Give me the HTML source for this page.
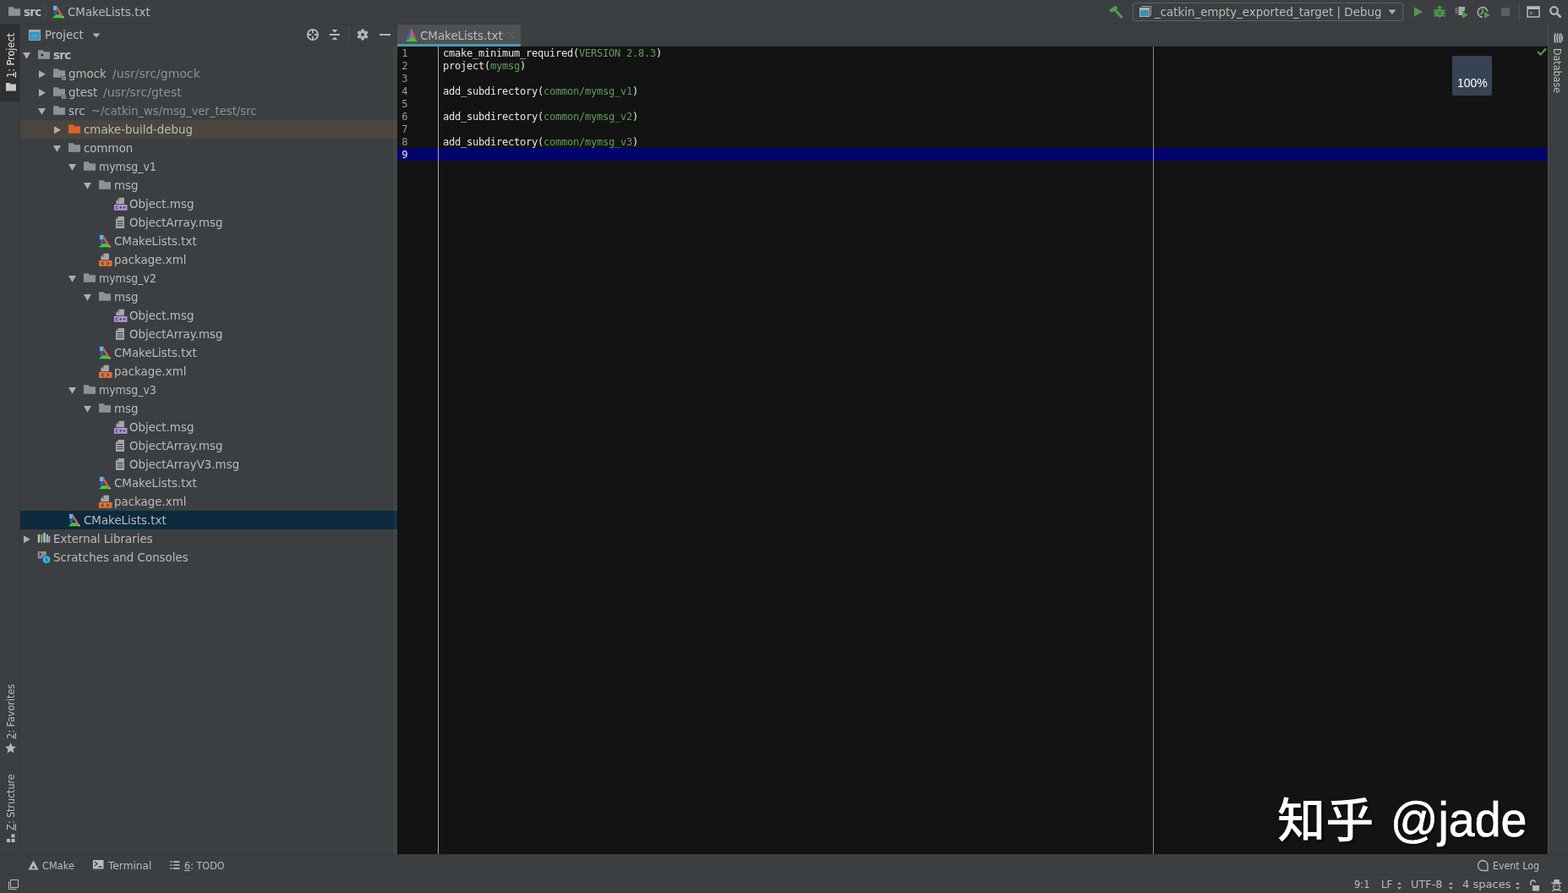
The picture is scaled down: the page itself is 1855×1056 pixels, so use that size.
<!DOCTYPE html>
<html><head><meta charset="utf-8"><title>CLion</title>
<style>
html,body{margin:0;padding:0;background:#3c3f41;}
body{width:1855px;height:1056px;position:relative;overflow:hidden;font-family:"DejaVu Sans","Liberation Sans",sans-serif;font-size:13.4px;color:#bbbbbb;}
div,span,svg{position:absolute;}
.ui{white-space:pre;line-height:22px;height:22px;}
#nav{left:0;top:0;width:1855px;height:28px;background:#3c3f41;}
#lstripe{left:0;top:28px;width:23px;height:982px;background:#3c3f41;border-right:1px solid #35383a;}
#rstripe{left:1831px;top:28px;width:24px;height:982px;background:#3c3f41;border-left:1px solid #505355;box-sizing:border-box;}
#proj{left:24px;top:28px;width:446px;height:982px;background:#3c3f41;}
#phead{left:0;top:0;width:446px;height:25px;border-bottom:1px solid #35383a;}
.row{left:0;width:446px;height:22px;margin-top:-28px;}
.row.excl{background:#4a463d;}
.row.sel{background:#0d293e;}
.ar{top:5px;fill:#adadad;}
.ic{top:3px;}
.nm{transform-origin:0 50%;top:1px;line-height:22px;height:22px;white-space:pre;color:#bbbbbb;}
.nm i{font-style:normal;color:#8e9192;margin-left:7px;display:inline-block;transform-origin:0 50%;}
.nm b{font-weight:bold;letter-spacing:-0.7px;}
#tabs{left:470px;top:28px;width:1361px;height:26px;background:#3c3f41;border-bottom:1px solid #35383a;}
#tab{left:0px;top:1px;width:146px;height:26px;background:#4e5254;}
#tab .ul{left:0;top:23px;width:146px;height:3px;background:#4a9ab4;}
#ed{left:470px;top:55px;width:1361px;height:955px;background:#131313;}
#gut{left:48px;top:0;width:1px;height:956px;background:rgba(255,255,255,.64);}
#margin{left:894px;top:0;width:1px;height:956px;background:rgba(255,255,255,.5);}
#curline{left:0;top:120px;width:1361px;height:15px;background:#03036e;}
.ln,.cl{font-family:"DejaVu Sans Mono","Liberation Mono",monospace;font-size:12px;letter-spacing:-0.224px;line-height:15px;height:15px;white-space:pre;margin-top:1px;}
.ln{left:5.300px;color:#9a9a9a;}
.ln.cur{color:#e8e8e8;}
.cl{left:54px;color:#e6e6e6;}
.cl em{font-style:normal;color:#5f9f58;}
#zoom{left:1248px;top:11px;width:47px;height:47px;background:#374253;border-radius:2px;}
#zoom span{white-space:pre;left:6px;top:22px;color:#ffffff;font-family:"Liberation Sans",sans-serif;font-size:14px;line-height:20px;}
.wm{white-space:pre;color:#fff;line-height:70px;height:70px;text-shadow:2px 2px 3px rgba(0,0,0,.7);}
#wm1{left:1040.800px;top:876px;transform-origin:0 50%;transform:scaleX(1.03);font-family:"Noto Sans CJK SC","WenQuanYi Zen Hei",sans-serif;font-weight:500;font-size:55.500px;letter-spacing:0;}
#wm2{left:1175px;top:878.500px;transform-origin:0 50%;transform:scaleX(0.975);font-family:"Liberation Sans",sans-serif;font-size:57px;-webkit-text-stroke:0.700px #fff;}
#btool{left:0;top:1010px;width:1855px;height:24px;background:#3c3f41;border-top:1px solid #35383a;box-sizing:border-box;}
#status{left:0;top:1034px;width:1855px;height:22px;background:#3c3f41;border-top:1px solid #35383a;box-sizing:border-box;}
.sm{font-size:12.4px;white-space:pre;line-height:20px;transform-origin:0 50%;}
.vt{white-space:pre;font-size:12.4px;line-height:16px;transform-origin:0 0;transform:rotate(-90deg);}
.vtr{white-space:pre;font-size:12.4px;line-height:16px;transform-origin:0 0;transform:rotate(90deg);}
u{text-decoration:underline;}
body{will-change:transform;}
</style></head><body>


<div id="nav">
 <svg style="left:9px;top:6px" width="16" height="16" viewBox="0 0 16 16"><path d="M1 2.200h5.600l1.500 2H15v8.500H1z" fill="#87939a"/></svg>
 <span class="ui" style="left:28px;top:4px;font-weight:bold;letter-spacing:-0.7px">src</span>
 <svg style="left:50px;top:5px" width="8" height="18" viewBox="0 0 8 18"><path d="M1.500 1l4 8-4 8" stroke="#4d5052" stroke-width="1" fill="none"/></svg>
 <svg style="left:61px;top:6px" width="16" height="16" viewBox="0 0 16 16"><path d="M2 0.800h4.500v5.500H2z" fill="#58b4e8"/><path d="M3 6.300h4.200L5.500 11 2.500 12z" fill="#3a55c8"/><path d="M6.500 1.200L15 15l-5.500-3.300L7 6.300z" fill="#e25548"/><path d="M0.800 15.300h14.200l-5-3.800-4.500-.5z" fill="#35d435"/><path d="M13.500 12.500l1.800 2.800h-2.500z" fill="#b8b8b8"/></svg>
 <span class="ui" style="left:80px;top:4px">CMakeLists.txt</span>

 <svg style="left:1311px;top:5px" width="18" height="18" viewBox="0 0 18 18"><path d="M2.500 8.200L10.300 3.400" stroke="#4f9b55" stroke-width="4.200" fill="none"/><path d="M8 6.500l7.800 8.800" stroke="#4f9b55" stroke-width="2.900" stroke-linecap="round" fill="none"/></svg>
 <div style="left:1340px;top:3px;width:318px;height:20px;border:1px solid #5e6162;border-radius:2px;"></div>
 <svg style="left:1347px;top:6px" width="16" height="16" viewBox="0 0 16 16"><path d="M3.500 1.500h11v11" stroke="#9ea3a6" fill="none"/><rect x="1.500" y="3.500" width="11" height="10" fill="#3f8fb5" stroke="#aab0b4"/><rect x="2" y="4" width="10" height="2" fill="#aab0b4"/></svg>
 <span class="ui" style="left:1366px;top:4px">_catkin_empty_exported_target | Debug</span>
 <svg style="left:1642px;top:11px" width="10" height="7" viewBox="0 0 10 7"><path d="M0.500 0.500h9L5 6z" fill="#b0b0b0"/></svg>
 <svg style="left:1672px;top:8px" width="12" height="12" viewBox="0 0 12 12"><path d="M1 0.300v11.400L11 6z" fill="#4a9c4d"/></svg>
 <svg style="left:1695px;top:6px" width="16" height="16" viewBox="0 0 16 16"><ellipse cx="8" cy="9.200" rx="4.400" ry="5.300" fill="#4a9c4d"/><path d="M5.500 3.500a2.500 2.500 0 0 1 5 0z" fill="#4a9c4d"/><path d="M1.500 5.500l3 2M14.500 5.500l-3 2M1 9.500h3M15 9.500h-3M1.500 13.500l3-2M14.500 13.500l-3-2" stroke="#4a9c4d" stroke-width="1.900"/><path d="M6 8h4M6 10.500h4" stroke="#3c3f41" stroke-width="1"/></svg>
 <svg style="left:1721px;top:6px" width="17" height="17" viewBox="0 0 17 17"><path d="M4.500 2h7.500v4.500l-3 1.500v4H4.500z" fill="#a4a9ac"/><path d="M0.500 4h3M0.500 6.500h3M0.500 9h3" stroke="#a4a9ac" stroke-width="1.200"/><path d="M9 7.800v8l7-4z" fill="#4a9c4d"/></svg>
 <svg style="left:1747px;top:6px" width="17" height="17" viewBox="0 0 17 17"><path d="M7 14.200A5.800 5.800 0 1 1 12.800 7.500" stroke="#a4a9ac" stroke-width="1.600" fill="none"/><path d="M7 4.500V9l-2.500 2" stroke="#a4a9ac" stroke-width="1.300" fill="none"/><path d="M9 7.800v8l7-4z" fill="#4a9c4d"/></svg>
 <div style="left:1776px;top:9px;width:10px;height:10px;background:#5c5f61;"></div>
 <div style="left:1797px;top:4px;width:1px;height:19px;background:#4f5254;"></div>
 <svg style="left:1806px;top:7px" width="16" height="14" viewBox="0 0 16 14"><rect x="1" y="1" width="14" height="12" fill="none" stroke="#b4b8ba" stroke-width="1.500"/><rect x="1" y="1" width="14" height="3" fill="#b4b8ba"/><path d="M4 6v5l4-2.500z" fill="#4a9c4d"/></svg>
 <svg style="left:1832px;top:6px" width="16" height="16" viewBox="0 0 16 16"><circle cx="6.500" cy="6.500" r="4.300" fill="none" stroke="#b4b8ba" stroke-width="2.200"/><path d="M9.800 9.800l4.700 4.700" stroke="#b4b8ba" stroke-width="2.600"/></svg>
</div>

<div id="lstripe">
 <div style="left:0;top:0;width:23px;height:92px;background:#2e3032;"></div>
 <svg style="left:7px;top:70px" width="12" height="10" viewBox="0 0 12 10"><path d="M0 0h4.500l1.200 1.600H12V9.500H0z" fill="#c8c8c8"/></svg>
 <span class="vt" style="left:5px;top:63.500px;color:#e4e4e4;transform:rotate(-90deg) scaleX(0.9074)"><u>1</u>: Project</span>
 <span class="vt" style="left:5px;top:846px;transform:rotate(-90deg) scaleX(0.9058)"><u>2</u>: Favorites</span>
 <svg style="left:6px;top:850px" width="13" height="13" viewBox="0 0 13 13"><path d="M6.500 0.300l1.900 4.200 4.400.5-3.300 3 1 4.500-4-2.400-4 2.400 1-4.500-3.300-3 4.400-.5z" fill="#b8b8b8"/></svg>
 <span class="vt" style="left:5px;top:953.500px;transform:rotate(-90deg) scaleX(0.8981)"><u>Z</u>: Structure</span>
 <svg style="left:8px;top:958px" width="10" height="11" viewBox="0 0 10 11"><rect x="5.500" y="0.500" width="4" height="4" fill="#b8b8b8"/><rect x="0" y="6" width="4" height="4" fill="#b8b8b8"/><rect x="5.500" y="6" width="4" height="4" fill="#b8b8b8"/></svg>
</div>
<div id="proj">
 <div id="phead">
  <svg style="left:10px;top:7px" width="14" height="13" viewBox="0 0 14 13"><rect x="0.500" y="0.500" width="13" height="12" fill="#3592c4" stroke="#9aa7b0"/><rect x="0.500" y="0.500" width="13" height="2.500" fill="#9aa7b0"/><rect x="3.500" y="5" width="7" height="5" fill="#40a0d0"/></svg>
  <span class="ui" style="left:29px;top:3px">Project</span>
  <svg style="left:85px;top:11px" width="10" height="6" viewBox="0 0 10 6"><path d="M0.500 0.500h9L5 5.500z" fill="#b0b0b0"/></svg>
  <svg style="left:338px;top:5px" width="16" height="16" viewBox="0 0 16 16"><circle cx="8" cy="8" r="6.100" fill="none" stroke="#b4b8ba" stroke-width="1.900"/><path d="M8 2v4.200M8 9.800v4.200M2 8h4.200M9.800 8h4.200" stroke="#b4b8ba" stroke-width="1.800"/></svg>
  <svg style="left:364px;top:5px" width="16" height="16" viewBox="0 0 16 16"><path d="M1.800 8h12.200" stroke="#b4b8ba" stroke-width="2"/><path d="M4.400 2.100h7.100L8 5.400zM4.400 14.100h7.100L8 10.800z" fill="#b4b8ba"/></svg>
  <div style="left:388px;top:4px;width:1px;height:18px;background:#4b4e50;"></div>
  <svg style="left:397px;top:5px" width="16" height="16" viewBox="0 0 16 16"><g fill="#b4b8ba"><circle cx="8" cy="8" r="4.700"/><rect x="6.200" y="1.400" width="3.600" height="13.200" rx="0.800"/><rect x="6.200" y="1.400" width="3.600" height="13.200" rx="0.800" transform="rotate(60 8 8)"/><rect x="6.200" y="1.400" width="3.600" height="13.200" rx="0.800" transform="rotate(120 8 8)"/></g><circle cx="8" cy="8" r="2" fill="#3c3f41"/></svg>
  <div style="left:425px;top:12px;width:12.500px;height:2px;background:#b4b8ba;"></div>
 </div>
<div class="row" style="top:54px"><svg class="ar" style="left:2px" width="12" height="12" viewBox="0 0 12 12"><path d="M1 3h9L5.500 10.800z"/></svg><svg class="ic" style="left:20px" width="17" height="16" viewBox="0 0 17 16"><path d="M1 2.200h5.600l1.500 2H15v8.500H1z" fill="#87939a"/><circle cx="5.800" cy="8" r="1.600" fill="#2b2f36"/></svg><span class="nm" style="left:39px"><b>src</b></span></div>
<div class="row" style="top:76px"><svg class="ar" style="left:20px" width="12" height="12" viewBox="0 0 12 12"><path d="M2 2.300v9l8-4.500z"/></svg><svg class="ic" style="left:38px" width="17" height="16" viewBox="0 0 17 16"><path d="M1 2.200h5.600l1.500 2H15v6.800h-4.500v1.700H1z" fill="#87939a"/><rect x="11.700" y="12" width="3.600" height="3.100" fill="#55595c" stroke="#b4babd" stroke-width="0.900"/></svg><span class="nm" style="left:57px">gmock<i style="transform:scaleX(1.0515)">/usr/src/gmock</i></span></div>
<div class="row" style="top:98px"><svg class="ar" style="left:20px" width="12" height="12" viewBox="0 0 12 12"><path d="M2 2.300v9l8-4.500z"/></svg><svg class="ic" style="left:38px" width="17" height="16" viewBox="0 0 17 16"><path d="M1 2.200h5.600l1.500 2H15v6.800h-4.500v1.700H1z" fill="#87939a"/><rect x="11.700" y="12" width="3.600" height="3.100" fill="#55595c" stroke="#b4babd" stroke-width="0.900"/></svg><span class="nm" style="left:57px">gtest<i style="transform:scaleX(1.0523)">/usr/src/gtest</i></span></div>
<div class="row" style="top:120px"><svg class="ar" style="left:20px" width="12" height="12" viewBox="0 0 12 12"><path d="M1 3h9L5.500 10.800z"/></svg><svg class="ic" style="left:38px" width="17" height="16" viewBox="0 0 17 16"><path d="M1 2.200h5.600l1.500 2H15v8.500H1z" fill="#87939a"/></svg><span class="nm" style="left:57px">src<i style="transform:scaleX(0.9823)">~/catkin_ws/msg_ver_test/src</i></span></div>
<div class="row excl" style="top:142px"><svg class="ar" style="left:38px" width="12" height="12" viewBox="0 0 12 12"><path d="M2 2.300v9l8-4.500z"/></svg><svg class="ic" style="left:56px" width="17" height="16" viewBox="0 0 17 16"><path d="M1 2.200h5.600l1.500 2H15v8.500H1z" fill="#d9622b"/></svg><span class="nm" style="left:75px">cmake-build-debug</span></div>
<div class="row" style="top:164px"><svg class="ar" style="left:38px" width="12" height="12" viewBox="0 0 12 12"><path d="M1 3h9L5.500 10.800z"/></svg><svg class="ic" style="left:56px" width="17" height="16" viewBox="0 0 17 16"><path d="M1 2.200h5.600l1.500 2H15v8.500H1z" fill="#87939a"/></svg><span class="nm" style="left:75px">common</span></div>
<div class="row" style="top:186px"><svg class="ar" style="left:56px" width="12" height="12" viewBox="0 0 12 12"><path d="M1 3h9L5.500 10.800z"/></svg><svg class="ic" style="left:74px" width="17" height="16" viewBox="0 0 17 16"><path d="M1 2.200h5.600l1.500 2H15v8.500H1z" fill="#87939a"/></svg><span class="nm" style="left:93px;transform:scaleX(0.9347)">mymsg_v1</span></div>
<div class="row" style="top:208px"><svg class="ar" style="left:74px" width="12" height="12" viewBox="0 0 12 12"><path d="M1 3h9L5.500 10.800z"/></svg><svg class="ic" style="left:92px" width="17" height="16" viewBox="0 0 17 16"><path d="M1 2.200h5.600l1.500 2H15v8.500H1z" fill="#87939a"/></svg><span class="nm" style="left:111px">msg</span></div>
<div class="row" style="top:230px"><svg class="ic" style="left:110px" width="17" height="16" viewBox="0 0 17 16"><path d="M7 0.800h6v7.400H3.300V4.500z" fill="#a2a6a8"/><path d="M7 0.800v3.700H3.300z" fill="#6e7275"/><rect x="1" y="9" width="15.500" height="6.800" fill="#b495d6"/><path d="M5.600 10.900h-2.200v3h2.200M8.700 10.900v3M7.200 12.400h3M13 10.900v3M11.500 12.400h3" stroke="#4b3a78" stroke-width="1" fill="none"/></svg><span class="nm" style="left:129px">Object.msg</span></div>
<div class="row" style="top:252px"><svg class="ic" style="left:110px" width="17" height="16" viewBox="0 0 17 16"><path d="M6 1h7v14H3V4z" fill="#a2a6a8"/><path d="M6 1v3H3z" fill="#6e7275"/><path d="M4.600 6.500h6.800M4.600 9.100h6.800M4.600 11.700h6.800" stroke="#3c3f41" stroke-width="1"/></svg><span class="nm" style="left:129px">ObjectArray.msg</span></div>
<div class="row" style="top:274px"><svg class="ic" style="left:92px" width="17" height="16" viewBox="0 0 17 16"><path d="M2 0.800h4.500v5.500H2z" fill="#58b4e8"/><path d="M3 6.300h4.200L5.500 11 2.500 12z" fill="#3a55c8"/><path d="M6.500 1.200L15 15l-5.500-3.300L7 6.300z" fill="#e25548"/><path d="M0.800 15.300h14.200l-5-3.800-4.500-.5z" fill="#35d435"/><path d="M13.500 12.500l1.800 2.800h-2.500z" fill="#b8b8b8"/></svg><span class="nm" style="left:111px">CMakeLists.txt</span></div>
<div class="row" style="top:296px"><svg class="ic" style="left:92px" width="17" height="16" viewBox="0 0 17 16"><path d="M7 0.800h6v7.400H3.300V4.500z" fill="#a2a6a8"/><path d="M7 0.800v3.700H3.300z" fill="#6e7275"/><rect x="1" y="9" width="15.500" height="6.800" fill="#dd733c"/><path d="M6.800 10.700l-2.600 1.700 2.600 1.700M10.200 10.700l2.600 1.700-2.600 1.700" stroke="#7a3210" stroke-width="1.100" fill="none"/></svg><span class="nm" style="left:111px">package.xml</span></div>
<div class="row" style="top:318px"><svg class="ar" style="left:56px" width="12" height="12" viewBox="0 0 12 12"><path d="M1 3h9L5.500 10.800z"/></svg><svg class="ic" style="left:74px" width="17" height="16" viewBox="0 0 17 16"><path d="M1 2.200h5.600l1.500 2H15v8.500H1z" fill="#87939a"/></svg><span class="nm" style="left:93px;transform:scaleX(0.9347)">mymsg_v2</span></div>
<div class="row" style="top:340px"><svg class="ar" style="left:74px" width="12" height="12" viewBox="0 0 12 12"><path d="M1 3h9L5.500 10.800z"/></svg><svg class="ic" style="left:92px" width="17" height="16" viewBox="0 0 17 16"><path d="M1 2.200h5.600l1.500 2H15v8.500H1z" fill="#87939a"/></svg><span class="nm" style="left:111px">msg</span></div>
<div class="row" style="top:362px"><svg class="ic" style="left:110px" width="17" height="16" viewBox="0 0 17 16"><path d="M7 0.800h6v7.400H3.300V4.500z" fill="#a2a6a8"/><path d="M7 0.800v3.700H3.300z" fill="#6e7275"/><rect x="1" y="9" width="15.500" height="6.800" fill="#b495d6"/><path d="M5.600 10.900h-2.200v3h2.200M8.700 10.900v3M7.200 12.400h3M13 10.900v3M11.500 12.400h3" stroke="#4b3a78" stroke-width="1" fill="none"/></svg><span class="nm" style="left:129px">Object.msg</span></div>
<div class="row" style="top:384px"><svg class="ic" style="left:110px" width="17" height="16" viewBox="0 0 17 16"><path d="M6 1h7v14H3V4z" fill="#a2a6a8"/><path d="M6 1v3H3z" fill="#6e7275"/><path d="M4.600 6.500h6.800M4.600 9.100h6.800M4.600 11.700h6.800" stroke="#3c3f41" stroke-width="1"/></svg><span class="nm" style="left:129px">ObjectArray.msg</span></div>
<div class="row" style="top:406px"><svg class="ic" style="left:92px" width="17" height="16" viewBox="0 0 17 16"><path d="M2 0.800h4.500v5.500H2z" fill="#58b4e8"/><path d="M3 6.300h4.200L5.500 11 2.500 12z" fill="#3a55c8"/><path d="M6.500 1.200L15 15l-5.500-3.300L7 6.300z" fill="#e25548"/><path d="M0.800 15.300h14.200l-5-3.800-4.500-.5z" fill="#35d435"/><path d="M13.500 12.500l1.800 2.800h-2.500z" fill="#b8b8b8"/></svg><span class="nm" style="left:111px">CMakeLists.txt</span></div>
<div class="row" style="top:428px"><svg class="ic" style="left:92px" width="17" height="16" viewBox="0 0 17 16"><path d="M7 0.800h6v7.400H3.300V4.500z" fill="#a2a6a8"/><path d="M7 0.800v3.700H3.300z" fill="#6e7275"/><rect x="1" y="9" width="15.500" height="6.800" fill="#dd733c"/><path d="M6.800 10.700l-2.600 1.700 2.600 1.700M10.200 10.700l2.600 1.700-2.600 1.700" stroke="#7a3210" stroke-width="1.100" fill="none"/></svg><span class="nm" style="left:111px">package.xml</span></div>
<div class="row" style="top:450px"><svg class="ar" style="left:56px" width="12" height="12" viewBox="0 0 12 12"><path d="M1 3h9L5.500 10.800z"/></svg><svg class="ic" style="left:74px" width="17" height="16" viewBox="0 0 17 16"><path d="M1 2.200h5.600l1.500 2H15v8.500H1z" fill="#87939a"/></svg><span class="nm" style="left:93px;transform:scaleX(0.9347)">mymsg_v3</span></div>
<div class="row" style="top:472px"><svg class="ar" style="left:74px" width="12" height="12" viewBox="0 0 12 12"><path d="M1 3h9L5.500 10.800z"/></svg><svg class="ic" style="left:92px" width="17" height="16" viewBox="0 0 17 16"><path d="M1 2.200h5.600l1.500 2H15v8.500H1z" fill="#87939a"/></svg><span class="nm" style="left:111px">msg</span></div>
<div class="row" style="top:494px"><svg class="ic" style="left:110px" width="17" height="16" viewBox="0 0 17 16"><path d="M7 0.800h6v7.400H3.300V4.500z" fill="#a2a6a8"/><path d="M7 0.800v3.700H3.300z" fill="#6e7275"/><rect x="1" y="9" width="15.500" height="6.800" fill="#b495d6"/><path d="M5.600 10.900h-2.200v3h2.200M8.700 10.900v3M7.200 12.400h3M13 10.900v3M11.500 12.400h3" stroke="#4b3a78" stroke-width="1" fill="none"/></svg><span class="nm" style="left:129px">Object.msg</span></div>
<div class="row" style="top:516px"><svg class="ic" style="left:110px" width="17" height="16" viewBox="0 0 17 16"><path d="M6 1h7v14H3V4z" fill="#a2a6a8"/><path d="M6 1v3H3z" fill="#6e7275"/><path d="M4.600 6.500h6.800M4.600 9.100h6.800M4.600 11.700h6.800" stroke="#3c3f41" stroke-width="1"/></svg><span class="nm" style="left:129px">ObjectArray.msg</span></div>
<div class="row" style="top:538px"><svg class="ic" style="left:110px" width="17" height="16" viewBox="0 0 17 16"><path d="M6 1h7v14H3V4z" fill="#a2a6a8"/><path d="M6 1v3H3z" fill="#6e7275"/><path d="M4.600 6.500h6.800M4.600 9.100h6.800M4.600 11.700h6.800" stroke="#3c3f41" stroke-width="1"/></svg><span class="nm" style="left:129px">ObjectArrayV3.msg</span></div>
<div class="row" style="top:560px"><svg class="ic" style="left:92px" width="17" height="16" viewBox="0 0 17 16"><path d="M2 0.800h4.500v5.500H2z" fill="#58b4e8"/><path d="M3 6.300h4.200L5.500 11 2.500 12z" fill="#3a55c8"/><path d="M6.500 1.200L15 15l-5.500-3.300L7 6.300z" fill="#e25548"/><path d="M0.800 15.300h14.200l-5-3.800-4.500-.5z" fill="#35d435"/><path d="M13.500 12.500l1.800 2.800h-2.500z" fill="#b8b8b8"/></svg><span class="nm" style="left:111px">CMakeLists.txt</span></div>
<div class="row" style="top:582px"><svg class="ic" style="left:92px" width="17" height="16" viewBox="0 0 17 16"><path d="M7 0.800h6v7.400H3.300V4.500z" fill="#a2a6a8"/><path d="M7 0.800v3.700H3.300z" fill="#6e7275"/><rect x="1" y="9" width="15.500" height="6.800" fill="#dd733c"/><path d="M6.800 10.700l-2.600 1.700 2.600 1.700M10.200 10.700l2.600 1.700-2.600 1.700" stroke="#7a3210" stroke-width="1.100" fill="none"/></svg><span class="nm" style="left:111px">package.xml</span></div>
<div class="row sel" style="top:604px"><svg class="ic" style="left:56px" width="17" height="16" viewBox="0 0 17 16"><path d="M2 0.800h4.500v5.500H2z" fill="#58b4e8"/><path d="M3 6.300h4.200L5.500 11 2.500 12z" fill="#3a55c8"/><path d="M6.500 1.200L15 15l-5.500-3.300L7 6.300z" fill="#e25548"/><path d="M0.800 15.300h14.200l-5-3.800-4.500-.5z" fill="#35d435"/><path d="M13.500 12.500l1.800 2.800h-2.500z" fill="#b8b8b8"/></svg><span class="nm" style="left:75px">CMakeLists.txt</span></div>
<div class="row" style="top:626px"><svg class="ar" style="left:2px" width="12" height="12" viewBox="0 0 12 12"><path d="M2 2.300v9l8-4.500z"/></svg><svg class="ic" style="left:20px" width="17" height="16" viewBox="0 0 17 16"><rect x="0.800" y="3" width="2.300" height="9.600" fill="#c4c6c8"/><rect x="4.200" y="3" width="2.100" height="9.600" fill="#7db561"/><rect x="7.300" y="1" width="2.400" height="11.600" fill="#b8bcbe"/><rect x="10.700" y="3" width="2.100" height="9.600" fill="#8fc0e0"/><rect x="13.400" y="5" width="1.800" height="7.600" fill="#8fc0e0"/></svg><span class="nm" style="left:39px">External Libraries</span></div>
<div class="row" style="top:648px"><svg class="ic" style="left:20px" width="17" height="16" viewBox="0 0 17 16"><path d="M0.800 1h10v8.300H0.800z" fill="#8a9399"/><path d="M2.500 2.500l2.500 2-2.500 2" stroke="#3c3f41" stroke-width="1.200" fill="none"/><circle cx="11" cy="10.700" r="5.400" fill="#2d4a5c"/><circle cx="11" cy="10.700" r="4.400" fill="#3fb0e8"/><path d="M10.800 8.300v2.600l1.600 1.400" stroke="#1d4d6b" stroke-width="1.300" fill="none"/></svg><span class="nm" style="left:39px">Scratches and Consoles</span></div>
 <div style="left:441px;top:26px;width:5px;height:957px;background:rgba(255,255,255,.03)"></div>
</div>

<div id="tabs"><div id="tab"><svg style="left:8px;top:3px" width="17" height="18" viewBox="0 0 17 18"><path d="M8.500 0.500L1.800 16.900 7.500 12.500z" fill="#4a5ad8"/><path d="M8.500 0.500l7.100 16.400-5.600-4.900z" fill="#e0504a"/><path d="M1.800 16.900h13.800l-5.600-4.900-2.500.5z" fill="#2ed02e"/><path d="M8.500 0.500L7.500 12.500l2.500-.5z" fill="#9a7ab0"/></svg><span class="ui" style="left:27px;top:3px">CMakeLists.txt</span><svg style="left:130px;top:8px" width="9" height="9" viewBox="0 0 9 9"><path d="M1 1l7 7M8 1l-7 7" stroke="#62676a" stroke-width="1"/></svg><div class="ul"></div></div></div>
<div id="ed">
 <div id="curline"></div>
 <div id="gut"></div>
 <div id="margin"></div>
 <div class="ln" style="top:0px">1</div><div class="ln" style="top:15px">2</div><div class="ln" style="top:30px">3</div><div class="ln" style="top:45px">4</div><div class="ln" style="top:60px">5</div><div class="ln" style="top:75px">6</div><div class="ln" style="top:90px">7</div><div class="ln" style="top:105px">8</div><div class="ln cur" style="top:120px">9</div>
 <div class="cl" style="top:0px">cmake_minimum_required(<em>VERSION 2.8.3</em>)</div><div class="cl" style="top:15px">project(<em>mymsg</em>)</div><div class="cl" style="top:45px">add_subdirectory(<em>common/mymsg_v1</em>)</div><div class="cl" style="top:75px">add_subdirectory(<em>common/mymsg_v2</em>)</div><div class="cl" style="top:105px">add_subdirectory(<em>common/mymsg_v3</em>)</div>
 <svg style="left:1348px;top:1px" width="12" height="10" viewBox="0 0 12 10"><path d="M1 5l3.500 3.500L11 1.500" stroke="#4f9b55" stroke-width="2.200" fill="none"/></svg>
 <div id="zoom"><span>100%</span></div>
 <div id="wm1" class="wm">知乎</div> <div id="wm2" class="wm">@jade</div>
</div>
<div id="rstripe">
 <svg style="left:6px;top:10px" width="13" height="14" viewBox="0 0 13 14"><g fill="none" stroke="#b4b8ba" stroke-width="1.800"><path d="M2 1.500q-1.600 5.500 0 11M5 1.500q-1.600 5.500 0 11M8 1.500q-1.600 5.500 0 11"/></g><path d="M9.500 1.500q3 5.500 0 11q-1.600-5.500 0-11z" fill="#b4b8ba"/></svg>
 <span class="vtr" style="left:18.300px;top:29px;transform:rotate(90deg) scaleX(0.8964)">Database</span>
</div>
<div id="btool">
 <svg style="left:33px;top:6px" width="13" height="12" viewBox="0 0 13 12"><path d="M6.500 0.500L0.500 11.500h12z" fill="#b8bcbe"/><path d="M6.500 6l-2 4h4z" fill="#3c3f41"/></svg>
 <span class="sm" style="left:50px;top:3px;transform:scaleX(0.9202)">CMake</span>
 <svg style="left:110px;top:6px" width="13" height="11" viewBox="0 0 13 11"><rect x="0" y="0" width="12.500" height="10.500" fill="#b8bcbe"/><path d="M2 2l3 2.500L2 7M6.500 8h4" stroke="#3c3f41" stroke-width="1.400" fill="none"/></svg>
 <span class="sm" style="left:127.500px;top:3px;transform:scaleX(0.9814)">Terminal</span>
 <svg style="left:201px;top:7px" width="12" height="10" viewBox="0 0 12 10"><path d="M0.500 1.200h2M4 1.200h7.500M0.500 5h2M4 5h7.500M0.500 8.800h2M4 8.800h7.500" stroke="#b8bcbe" stroke-width="1.700"/></svg>
 <span class="sm" style="left:217.500px;top:3px;transform:scaleX(0.9064)"><u>6</u>: TODO</span>
 <svg style="left:1747px;top:5px" width="15" height="15" viewBox="0 0 15 15"><path d="M7.500 1.500a6 6 0 1 0 0 12h5.500v-6a6 6 0 0 0-5.500-6z" fill="none" stroke="#b4b8ba" stroke-width="1.300"/></svg>
 <span class="sm" style="left:1765.500px;top:3px;transform:scaleX(0.8932)">Event Log</span>
</div>
<div id="status">
 <svg style="left:9px;top:4px" width="14" height="14" viewBox="0 0 14 14"><path d="M3.500 1.500h9v9h-9z" fill="none" stroke="#b4b8ba" stroke-width="1"/><path d="M1.500 3.500v9h9" fill="none" stroke="#b4b8ba" stroke-width="1"/></svg>
 <span class="sm" style="left:1602px;top:1px;font-size:13px;transform:scaleX(0.8842)">9:1</span>
 <span class="sm" style="left:1633.500px;top:1px;font-size:13px;transform:scaleX(0.9026)">LF</span><svg style="left:1652px;top:7px" width="7" height="11" viewBox="0 0 7 11"><path d="M1 4l2.500-3L6 4zM1 7l2.500 3L6 7z" fill="#a0a4a6"/></svg>
 <span class="sm" style="left:1669px;top:1px;font-size:13px;transform:scaleX(0.9893)">UTF-8</span><svg style="left:1713px;top:7px" width="7" height="11" viewBox="0 0 7 11"><path d="M1 4l2.500-3L6 4zM1 7l2.500 3L6 7z" fill="#a0a4a6"/></svg>
 <span class="sm" style="left:1730px;top:1px;font-size:13px;transform:scaleX(1.0047)">4 spaces</span><svg style="left:1792px;top:7px" width="7" height="11" viewBox="0 0 7 11"><path d="M1 4l2.500-3L6 4zM1 7l2.500 3L6 7z" fill="#a0a4a6"/></svg>
 <svg style="left:1809px;top:5px" width="13" height="14" viewBox="0 0 13 14"><path d="M2 7V3.500a2.500 2.500 0 0 1 5 0" fill="none" stroke="#b4b8ba" stroke-width="1.600"/><rect x="4" y="7" width="8" height="6.500" fill="#b4b8ba"/></svg>
 <svg style="left:1835px;top:4px" width="13" height="15" viewBox="0 0 13 15"><path d="M3.500 1h6l.5 3.500h2.500v1.500H.500V4.500H3z" fill="#b4b8ba"/><circle cx="6.500" cy="9.500" r="3.800" fill="none" stroke="#b4b8ba" stroke-width="1.300"/><path d="M1 14.500q5.500-3 11 0" stroke="#b4b8ba" stroke-width="1.300" fill="none"/><circle cx="5" cy="9" r=".8" fill="#b4b8ba"/><circle cx="8" cy="9" r=".8" fill="#b4b8ba"/></svg>
</div>
<div style="left:0;top:28px;width:1855px;height:1px;background:#35383a"></div>
<div style="left:24px;top:50px;width:441px;height:1px;background:#383b3d"></div>
</body></html>
